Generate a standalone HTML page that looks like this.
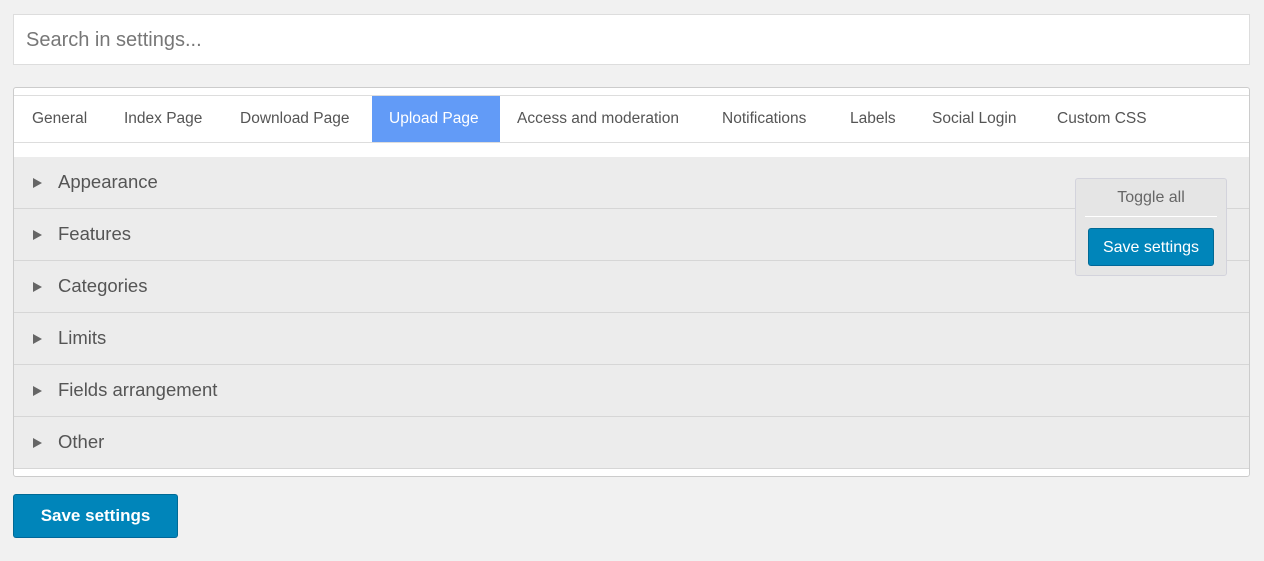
<!DOCTYPE html>
<html><head><style>
*{box-sizing:border-box;margin:0;padding:0}
body{width:1264px;height:561px;background:#f1f1f1;font-family:"Liberation Sans",sans-serif;position:relative;overflow:hidden;color:#555}
.search{position:absolute;left:13px;top:14px;width:1237px;height:51px;background:#fff;border:1px solid #ddd;font-size:20px;color:#777;padding:14px 12px 0}
.panel{position:absolute;left:13px;top:87px;width:1237px;height:390px;background:#fff;border:1px solid #ccc;border-radius:3px}
.tabs{position:absolute;left:0;top:7px;width:1235px;height:48px;border-top:1px solid #ddd;border-bottom:1px solid #ddd}
.tab{position:absolute;top:0;height:46px;line-height:45px;font-size:15.5px;color:#555}
.tab.act{background:#629bf7;color:#fff;padding:0 17px}
.sec{position:absolute;left:0;width:1235px;height:52px;background:#ececec;border-bottom:1px solid #d6d6d6;font-size:18.5px;color:#555;padding-left:44px;line-height:49px}
.sec:before{content:"";position:absolute;left:19px;top:21px;border-left:9px solid #666;border-top:5px solid transparent;border-bottom:5px solid transparent}
.tog{position:absolute;left:1075px;top:178px;width:152px;height:98px;background:#e5e5e5;border:1px solid #d3d3dc;border-radius:3px}
.tog .t{text-align:center;font-size:16px;color:#666;margin-top:10px;height:28px;border-bottom:1px solid #fff;margin-left:9px;margin-right:9px}
.btn{background:#0085ba;border:1px solid #006a95;border-bottom-color:#006799;border-radius:3px;color:#fff;text-align:center}
.b1{position:absolute;left:12px;top:49px;width:126px;height:38px;font-size:16px;line-height:38px}
.b2{position:absolute;left:13px;top:494px;width:165px;height:44px;font-size:17px;font-weight:bold;line-height:41px}
</style></head><body>
<div class="search">Search in settings...</div>
<div class="panel">
<div class="tabs">
<span class="tab" style="left:18px">General</span>
<span class="tab" style="left:110px">Index Page</span>
<span class="tab" style="left:226px">Download Page</span>
<span class="tab act" style="left:358px;width:128px">Upload Page</span>
<span class="tab" style="left:503px">Access and moderation</span>
<span class="tab" style="left:708px">Notifications</span>
<span class="tab" style="left:836px">Labels</span>
<span class="tab" style="left:918px">Social Login</span>
<span class="tab" style="left:1043px">Custom CSS</span>
</div>
<div class="sec" style="top:69px">Appearance</div>
<div class="sec" style="top:121px">Features</div>
<div class="sec" style="top:173px">Categories</div>
<div class="sec" style="top:225px">Limits</div>
<div class="sec" style="top:277px">Fields arrangement</div>
<div class="sec" style="top:329px">Other</div>
</div>
<div class="tog"><div class="t">Toggle all</div><div class="btn b1">Save settings</div></div>
<div class="btn b2">Save settings</div>
</body></html>
